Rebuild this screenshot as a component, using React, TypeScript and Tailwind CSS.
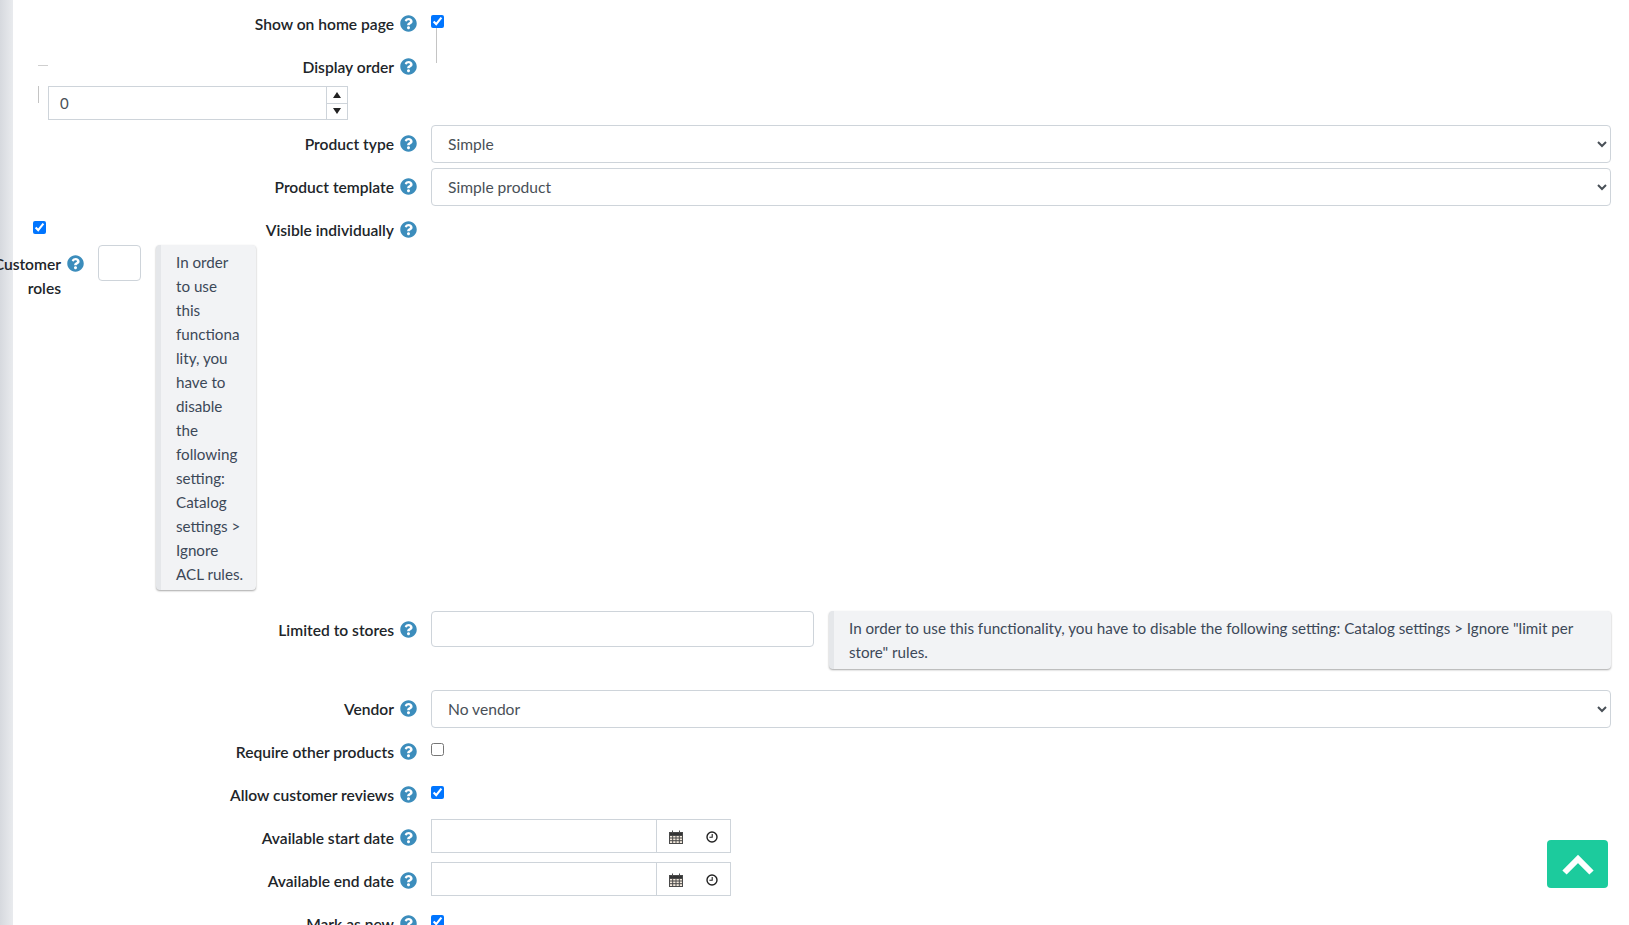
import { FaQuestionCircle } from "react-icons/fa";
import type { ReactNode } from "react";

const selectCls =
  "w-[1180px] h-[38px] bg-white border border-[#ced4da] rounded-[4px] pl-[12px] pr-[11px] text-[15.6px] text-[#495057]";

function Help() {
  return <FaQuestionCircle className="shrink-0 text-[#3c8dbc]" size={17} />;
}

function Label({ text, before }: { text: string; before?: ReactNode }) {
  return (
    <div className="w-[404px] shrink-0 flex items-start justify-end gap-[6px] pt-[7px]">
      {before}
      <span className="font-semibold text-[15.6px] leading-[24px] text-[#212529] whitespace-nowrap">{text}</span>
      <span className="pt-[3px]">
        <Help />
      </span>
    </div>
  );
}

function Row({ text, before, children, h = 43 }: { text: string; before?: ReactNode; children?: ReactNode; h?: number }) {
  return (
    <div className={h === 43 ? "flex h-[43px]" : h === 33 ? "flex h-[33px]" : "flex h-[38px]"}>
      <Label text={text} before={before} />
      <div className="ml-[14px]">{children}</div>
    </div>
  );
}

function Check({ on = true }: { on?: boolean }) {
  return <input type="checkbox" defaultChecked={on} className="block m-0 w-[13px] h-[13px] mt-[10px]" />;
}

function DatePicker() {
  return (
    <div className="flex w-[300px] h-[34px] border border-[#ced4da] bg-white">
      <div className="w-[225px] border-r border-[#ced4da]" />
      <div className="flex-1 flex items-center pl-[12px] pt-[2px] gap-[23px]">
        <svg width="14" height="14" viewBox="0 0 14 14" fill="none" stroke="#4a4a4a" strokeWidth="1">
          <rect x="0.5" y="2.5" width="13" height="11" fill="#f3e9dc" />
          <rect x="0.5" y="2.5" width="13" height="3" fill="#333" />
          <path d="M3.5 0.5v3M10.5 0.5v3M0.5 8h13M0.5 10.7h13M3.7 5.5v8M7 5.5v8M10.3 5.5v8" />
        </svg>
        <svg width="12" height="12" viewBox="0 0 12 12" fill="none" stroke="#222" strokeWidth="1.4">
          <circle cx="6" cy="6" r="5" />
          <path d="M6.2 3v3.2H3.4" strokeWidth="1.1" />
        </svg>
      </div>
    </div>
  );
}

function Note({ children, cls }: { children: ReactNode; cls: string }) {
  return (
    <div className={"shrink-0 bg-[#f2f3f5] border-l-[5px] border-[#e5e7ea] rounded-[4px] shadow-[0_1px_2px_rgba(0,0,0,0.35)] pl-[15px] text-[15.2px] leading-[24px] text-[#3c4858] " + cls}>
      {children}
    </div>
  );
}

export default function App() {
  return (
    <div className="relative flex h-[925px] w-full overflow-hidden bg-white text-[16px] font-['Lato','Noto_Sans',sans-serif]">
      <aside className="w-[13px] shrink-0 bg-gradient-to-r from-[#d6d9de] to-[#e9ebee]" />
      <main className="relative flex-1 min-w-0 pt-[5px]">
        <Row text="Show on home page">
          <Check />
          <div className="ml-[5px] w-px h-[35px] bg-[#c4c4c4]" />
        </Row>
        <Row text="Display order" h={38} before={<div className="mr-auto ml-[25px] mt-[10px] w-[10px] h-px bg-[#cfcfcf]" />} />
        <div className="flex items-start h-[39px] ml-[25px]">
          <div className="w-px h-[17px] bg-[#c4c4c4]" />
          <div className="ml-[9px] flex w-[300px] h-[34px] border border-[#ced4da] bg-white text-[#495057]">
            <div className="flex-1 pl-[11px] text-[15px] leading-[33px]">0</div>
            <div className="w-[21px] border-l border-[#ced4da] flex flex-col">
              <div className="flex-1 flex items-center justify-center border-b border-[#ced4da]">
                <svg width="8" height="6" viewBox="0 0 8 6"><path d="M4 0l4 6H0z" fill="#222" /></svg>
              </div>
              <div className="flex-1 flex items-center justify-center">
                <svg width="8" height="6" viewBox="0 0 8 6"><path d="M0 0h8L4 6z" fill="#222" /></svg>
              </div>
            </div>
          </div>
        </div>
        <Row text="Product type">
          <select className={selectCls} defaultValue="Simple"><option>Simple</option></select>
        </Row>
        <Row text="Product template">
          <select className={selectCls} defaultValue="Simple product"><option>Simple product</option></select>
        </Row>
        <Row text="Visible individually" h={33} before={<input type="checkbox" defaultChecked className="block mr-auto ml-[20px] mt-[3px] w-[13px] h-[13px]" />} />
        <div className="flex items-start -ml-[13px] h-[367px]">
          <div className="w-[84px] shrink-0 flex items-start justify-end gap-[6px] pt-[8px]">
            <div className="flex flex-col items-end font-semibold text-[15.6px] leading-[24px] text-[#212529]">
              <span className="whitespace-nowrap">Customer</span>
              <span>roles</span>
            </div>
            <span className="pt-[3px]"><Help /></span>
          </div>
          <div className="ml-[14px] mt-[1px] w-[43px] h-[36px] shrink-0 border border-[#ced4da] rounded-[4px] bg-white" />
          <Note cls="ml-[15px] mt-[1px] w-[100px] h-[345px] pt-[5px] pr-[10px]">
            <div className="whitespace-nowrap">
              <div>In order</div><div>to use</div><div>this</div><div>functiona</div><div>lity, you</div><div>have to</div><div>disable</div><div>the</div><div>following</div><div>setting:</div><div>Catalog</div><div>settings &gt;</div><div>Ignore</div><div>ACL rules.</div>
            </div>
          </Note>
        </div>
        <div className="flex h-[79px]">
          <Label text="Limited to stores" />
          <div className="ml-[14px] w-[383px] h-[36px] border border-[#ced4da] rounded-[4px] bg-white" />
          <Note cls="ml-[15px] w-[782px] h-[58px] pt-[5px] pr-[10px]">
            In order to use this functionality, you have to disable the following setting: Catalog settings &gt; Ignore "limit per store" rules.
          </Note>
        </div>
        <Row text="Vendor">
          <select className={selectCls} defaultValue="No vendor"><option>No vendor</option></select>
        </Row>
        <Row text="Require other products"><Check on={false} /></Row>
        <Row text="Allow customer reviews"><Check /></Row>
        <Row text="Available start date"><DatePicker /></Row>
        <Row text="Available end date"><DatePicker /></Row>
        <Row text="Mark as new"><Check /></Row>
      </main>
      <button className="absolute left-[1547px] top-[840px] w-[61px] h-[48px] rounded-[4px] bg-[#1ccb9d] flex items-center justify-center">
        <svg width="32" height="22" viewBox="0 0 32 22" fill="none" stroke="#fff" strokeWidth="6">
          <path d="M2.5 19.5L16 6 29.5 19.5" />
        </svg>
      </button>
    </div>
  );
}
